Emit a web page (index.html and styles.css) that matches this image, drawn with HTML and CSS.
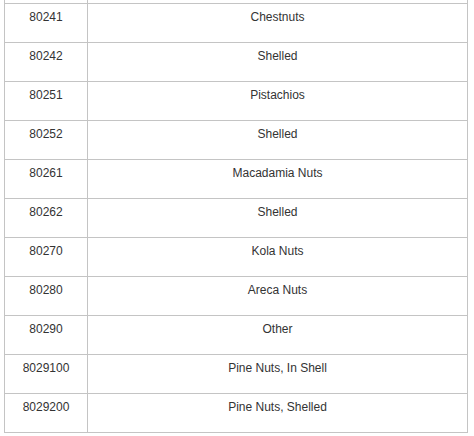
FILE: index.html
```html
<!DOCTYPE html>
<html>
<head>
<meta charset="utf-8">
<link rel="stylesheet" href="styles.css">
</head>
<body>
<div class="wrap">
<table class="codes">
<colgroup><col class="c1"><col class="c2"></colgroup>
<tr class="cut"><td></td><td></td></tr>
<tr><td>80241</td><td>Chestnuts</td></tr>
<tr><td>80242</td><td>Shelled</td></tr>
<tr><td>80251</td><td>Pistachios</td></tr>
<tr><td>80252</td><td>Shelled</td></tr>
<tr><td>80261</td><td>Macadamia Nuts</td></tr>
<tr><td>80262</td><td>Shelled</td></tr>
<tr><td>80270</td><td>Kola Nuts</td></tr>
<tr><td>80280</td><td>Areca Nuts</td></tr>
<tr><td>80290</td><td>Other</td></tr>
<tr><td>8029100</td><td>Pine Nuts, In Shell</td></tr>
<tr><td>8029200</td><td>Pine Nuts, Shelled</td></tr>
</table>
</div>
</body>
</html>
```
FILE: styles.css
```css
html, body {
  margin: 0;
  padding: 0;
  background: #ffffff;
}
.wrap {
  padding-left: 4px;
}
.codes {
  border-collapse: collapse;
  width: 464px;
  table-layout: fixed;
  font-family: "Liberation Sans", Arial, sans-serif;
  font-size: 12px;
  line-height: 14px;
  color: #333333;
}
.c1 { width: 83px; }
.codes td {
  border: 1px solid #c4c4c4;
  padding: 6px 8px 18px;
  text-align: center;
  vertical-align: top;
}
.codes .cut td {
  border-top: none;
  padding: 0;
  height: 3px;
  line-height: 0;
  font-size: 0;
}
```
